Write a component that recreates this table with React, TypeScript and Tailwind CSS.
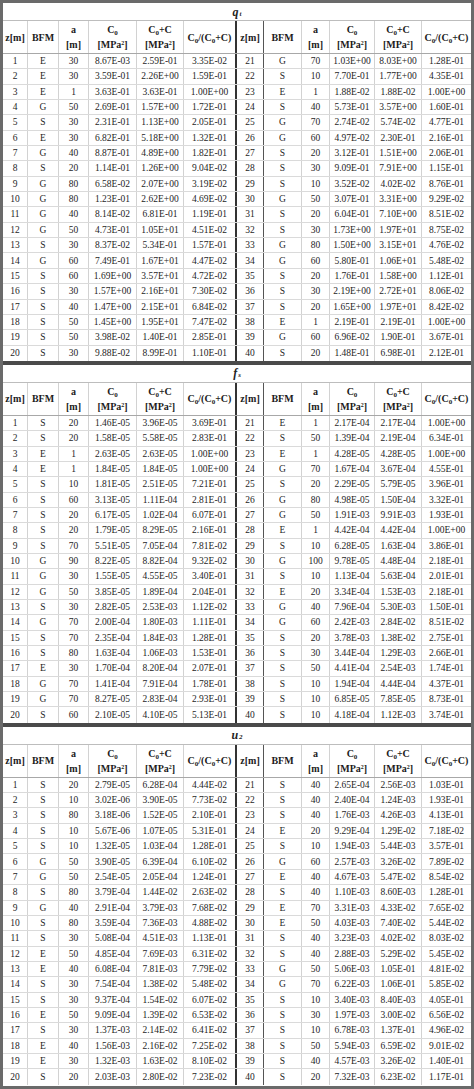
import type { ReactNode } from "react";

const qt = `1 E 30 8.67E-03 2.59E-01 3.35E-02|21 G 70 1.03E+00 8.03E+00 1.28E-01
2 E 30 3.59E-01 2.26E+00 1.59E-01|22 S 10 7.70E-01 1.77E+00 4.35E-01
3 E 1 3.63E-01 3.63E-01 1.00E+00|23 E 1 1.88E-02 1.88E-02 1.00E+00
4 G 50 2.69E-01 1.57E+00 1.72E-01|24 S 40 5.73E-01 3.57E+00 1.60E-01
5 S 30 2.31E-01 1.13E+00 2.05E-01|25 G 70 2.74E-02 5.74E-02 4.77E-01
6 E 30 6.82E-01 5.18E+00 1.32E-01|26 G 60 4.97E-02 2.30E-01 2.16E-01
7 G 40 8.87E-01 4.89E+00 1.82E-01|27 S 20 3.12E-01 1.51E+00 2.06E-01
8 S 20 1.14E-01 1.26E+00 9.04E-02|28 S 30 9.09E-01 7.91E+00 1.15E-01
9 G 80 6.58E-02 2.07E+00 3.19E-02|29 S 10 3.52E-02 4.02E-02 8.76E-01
10 G 80 1.23E-01 2.62E+00 4.69E-02|30 G 50 3.07E-01 3.31E+00 9.29E-02
11 G 40 8.14E-02 6.81E-01 1.19E-01|31 S 20 6.04E-01 7.10E+00 8.51E-02
12 G 50 4.73E-01 1.05E+01 4.51E-02|32 S 30 1.73E+00 1.97E+01 8.75E-02
13 S 30 8.37E-02 5.34E-01 1.57E-01|33 G 80 1.50E+00 3.15E+01 4.76E-02
14 G 60 7.49E-01 1.67E+01 4.47E-02|34 G 60 5.80E-01 1.06E+01 5.48E-02
15 S 60 1.69E+00 3.57E+01 4.72E-02|35 S 20 1.76E-01 1.58E+00 1.12E-01
16 S 30 1.57E+00 2.16E+01 7.30E-02|36 S 30 2.19E+00 2.72E+01 8.06E-02
17 S 40 1.47E+00 2.15E+01 6.84E-02|37 S 20 1.65E+00 1.97E+01 8.42E-02
18 S 50 1.45E+00 1.95E+01 7.47E-02|38 E 1 2.19E-01 2.19E-01 1.00E+00
19 S 50 3.98E-02 1.40E-01 2.85E-01|39 G 60 6.96E-02 1.90E-01 3.67E-01
20 S 30 9.88E-02 8.99E-01 1.10E-01|40 S 20 1.48E-01 6.98E-01 2.12E-01`;

const fs = `1 S 20 1.46E-05 3.96E-05 3.69E-01|21 E 1 2.17E-04 2.17E-04 1.00E+00
2 S 20 1.58E-05 5.58E-05 2.83E-01|22 S 50 1.39E-04 2.19E-04 6.34E-01
3 E 1 2.63E-05 2.63E-05 1.00E+00|23 E 1 4.28E-05 4.28E-05 1.00E+00
4 E 1 1.84E-05 1.84E-05 1.00E+00|24 G 70 1.67E-04 3.67E-04 4.55E-01
5 S 10 1.81E-05 2.51E-05 7.21E-01|25 S 20 2.29E-05 5.79E-05 3.96E-01
6 S 60 3.13E-05 1.11E-04 2.81E-01|26 G 80 4.98E-05 1.50E-04 3.32E-01
7 S 20 6.17E-05 1.02E-04 6.07E-01|27 G 50 1.91E-03 9.91E-03 1.93E-01
8 S 20 1.79E-05 8.29E-05 2.16E-01|28 E 1 4.42E-04 4.42E-04 1.00E+00
9 S 70 5.51E-05 7.05E-04 7.81E-02|29 S 10 6.28E-05 1.63E-04 3.86E-01
10 G 90 8.22E-05 8.82E-04 9.32E-02|30 G 100 9.78E-05 4.48E-04 2.18E-01
11 G 30 1.55E-05 4.55E-05 3.40E-01|31 S 10 1.13E-04 5.63E-04 2.01E-01
12 G 50 3.85E-05 1.89E-04 2.04E-01|32 E 20 3.34E-04 1.53E-03 2.18E-01
13 S 30 2.82E-05 2.53E-03 1.12E-02|33 G 40 7.96E-04 5.30E-03 1.50E-01
14 G 70 2.00E-04 1.80E-03 1.11E-01|34 G 60 2.42E-03 2.84E-02 8.51E-02
15 S 70 2.35E-04 1.84E-03 1.28E-01|35 S 20 3.78E-03 1.38E-02 2.75E-01
16 S 80 1.63E-04 1.06E-03 1.53E-01|36 S 30 3.44E-04 1.29E-03 2.66E-01
17 E 30 1.70E-04 8.20E-04 2.07E-01|37 S 50 4.41E-04 2.54E-03 1.74E-01
18 G 70 1.41E-04 7.91E-04 1.78E-01|38 S 10 1.94E-04 4.44E-04 4.37E-01
19 G 70 8.27E-05 2.83E-04 2.93E-01|39 S 10 6.85E-05 7.85E-05 8.73E-01
20 S 60 2.10E-05 4.10E-05 5.13E-01|40 S 10 4.18E-04 1.12E-03 3.74E-01`;

const u2 = `1 S 20 2.79E-05 6.28E-04 4.44E-02|21 S 40 2.65E-04 2.56E-03 1.03E-01
2 S 10 3.02E-06 3.90E-05 7.73E-02|22 S 40 2.40E-04 1.24E-03 1.93E-01
3 S 80 3.18E-06 1.52E-05 2.10E-01|23 S 40 1.76E-03 4.26E-03 4.13E-01
4 S 10 5.67E-06 1.07E-05 5.31E-01|24 E 20 9.29E-04 1.29E-02 7.18E-02
5 S 10 1.32E-05 1.03E-04 1.28E-01|25 S 10 1.94E-03 5.44E-03 3.57E-01
6 G 50 3.90E-05 6.39E-04 6.10E-02|26 G 60 2.57E-03 3.26E-02 7.89E-02
7 G 50 2.54E-05 2.05E-04 1.24E-01|27 E 40 4.67E-03 5.47E-02 8.54E-02
8 S 80 3.79E-04 1.44E-02 2.63E-02|28 S 40 1.10E-03 8.60E-03 1.28E-01
9 G 40 2.91E-04 3.79E-03 7.68E-02|29 E 70 3.31E-03 4.33E-02 7.65E-02
10 S 80 3.59E-04 7.36E-03 4.88E-02|30 E 50 4.03E-03 7.40E-02 5.44E-02
11 S 30 5.08E-04 4.51E-03 1.13E-01|31 S 40 3.23E-03 4.02E-02 8.03E-02
12 E 50 4.85E-04 7.69E-03 6.31E-02|32 S 40 2.88E-03 5.29E-02 5.45E-02
13 E 40 6.08E-04 7.81E-03 7.79E-02|33 G 50 5.06E-03 1.05E-01 4.81E-02
14 S 30 7.54E-04 1.38E-02 5.48E-02|34 G 70 6.22E-03 1.06E-01 5.85E-02
15 S 30 9.37E-04 1.54E-02 6.07E-02|35 S 10 3.40E-03 8.40E-03 4.05E-01
16 E 50 9.09E-04 1.39E-02 6.53E-02|36 S 30 1.97E-03 3.00E-02 6.56E-02
17 S 30 1.37E-03 2.14E-02 6.41E-02|37 S 10 6.78E-03 1.37E-01 4.96E-02
18 E 40 1.56E-03 2.16E-02 7.25E-02|38 S 50 5.94E-03 6.59E-02 9.01E-02
19 E 30 1.32E-03 1.63E-02 8.10E-02|39 S 40 4.57E-03 3.26E-02 1.40E-01
20 S 20 2.03E-03 2.80E-02 7.23E-02|40 S 20 7.32E-03 6.23E-02 1.17E-01`;

const parse = (s: string) =>
  s.split("\n").map((line) => line.replace("|", " ").trim().split(/\s+/));

const sections = [
  { sym: "q", sub: "t", rows: parse(qt) },
  { sym: "f", sub: "s", rows: parse(fs) },
  { sym: "u", sub: "2", rows: parse(u2) },
];

const grid =
  "grid grid-cols-[25px_31px_30px_48px_47px_53px_27px_38px_28px_45px_47px_49px]";

// right-hand borders per column
const colBorder = [
  "border-r border-[#d2d2d2]",
  "border-r border-[#d2d2d2]",
  "border-r border-[#d2d2d2]",
  "border-r border-[#d2d2d2]",
  "border-r border-[#d2d2d2]",
  "border-r-2 border-[#333]",
  "border-r border-[#555]",
  "border-r border-[#d2d2d2]",
  "border-r border-[#d2d2d2]",
  "border-r border-[#d2d2d2]",
  "border-r border-[#d2d2d2]",
  "",
];

const C0 = () => (
  <span>
    C<sub className="text-[7px] align-baseline relative top-[2px]">0</sub>
  </span>
);

const MPa = () => (
  <span>
    [MPa<sup className="text-[6px] relative -top-[3px] align-baseline">2</sup>]
  </span>
);

const Two = ({ top, bottom }: { top: ReactNode; bottom: ReactNode }) => (
  <div className="flex flex-col items-center leading-[15px]">
    <span>{top}</span>
    <span>{bottom}</span>
  </div>
);

const headerCells: ReactNode[] = [
  "z[m]",
  "BFM",
  <Two top="a" bottom="[m]" />,
  <Two top={<C0 />} bottom={<MPa />} />,
  <Two top={<span><C0 />+C</span>} bottom={<MPa />} />,
  <span>
    <C0 />/(<C0 />+C)
  </span>,
];

function Section({ sym, sub, rows, first }: { sym: string; sub: string; rows: string[][]; first: boolean }) {
  return (
    <div className={first ? "" : "border-t-4 border-[#4a4a4a]"}>
      <div className="h-[18px] flex items-center justify-center border-b border-[#bdbdbd] text-[12px] font-bold italic text-[#222]">
        {sym}
        <sub className="text-[7px] relative top-[2px] align-baseline ml-[1px]">{sub}</sub>
      </div>
      <div className={`${grid} h-[33px] border-b border-[#a8a8a8] text-[10px] font-bold text-[#1c1c1c]`}>
        {[...headerCells, ...headerCells].map((c, i) => (
          <div key={i} className={`flex items-center justify-center whitespace-nowrap ${colBorder[i]}`}>
            {c}
          </div>
        ))}
      </div>
      {rows.map((r, ri) => (
        <div
          key={ri}
          className={`${grid} h-[15.35px] text-[9.5px] text-[#1e1e1e] ${ri < rows.length - 1 ? "border-b border-[#dadada]" : ""}`}
        >
          {r.map((v, i) => (
            <div key={i} className={`flex items-center justify-center whitespace-nowrap ${colBorder[i]}`}>
              {v}
            </div>
          ))}
        </div>
      ))}
    </div>
  );
}

export default function App() {
  return (
    <div className="w-[474px] h-[1089px] bg-white border-[3px] border-[#6a6a6a] font-[family-name:'Liberation_Serif',serif] overflow-hidden">
      {sections.map((s, i) => (
        <Section key={s.sym} {...s} first={i === 0} />
      ))}
    </div>
  );
}
